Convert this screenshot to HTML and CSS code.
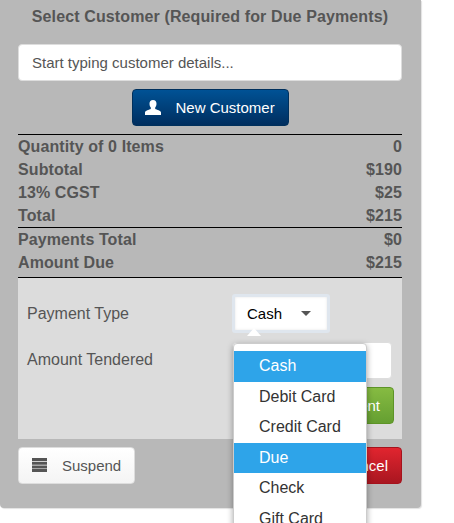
FILE: index.html
```html
<!DOCTYPE html>
<html lang="en">
<head>
  <meta charset="UTF-8">
  <meta name="viewport" content="width=device-width, initial-scale=1.0">
  <title>Register</title>
  <link rel="stylesheet" href="styles.css">
</head>
<body>
  <div class="panel">
    <h4 class="panel-title">Select Customer (Required for Due Payments)</h4>
    <input class="customer-input" type="text" placeholder="Start typing customer details...">
    <div class="new-customer-row">
      <button class="btn btn-blue">
        <svg class="icon" width="16" height="15" viewBox="0 0 16 15"><path fill="#fff" d="M8 0c2.300 0 3.500 1.600 3.500 3.800 0 1.500-.6 2.900-1.300 3.800v1.400c1.500.7 5.800 1.500 5.800 3.500V15H0v-2.500C0 10.500 4.300 9.700 5.800 9V7.600C5 6.700 4.500 5.300 4.500 3.800 4.500 1.600 5.700 0 8 0z"/></svg>
        New Customer
      </button>
    </div>

    <div class="totals">
      <div class="total-row"><span>Quantity of 0 Items</span><span>0</span></div>
      <div class="total-row"><span>Subtotal</span><span>$190</span></div>
      <div class="total-row"><span>13% CGST</span><span>$25</span></div>
      <div class="total-row"><span>Total</span><span>$215</span></div>
    </div>
    <div class="totals totals-last">
      <div class="total-row"><span>Payments Total</span><span>$0</span></div>
      <div class="total-row"><span>Amount Due</span><span>$215</span></div>
    </div>

    <div class="payment-box">
      <div class="form-row">
        <label class="form-label">Payment Type</label>
        <div class="select-wrap">
          <div class="select-toggle">Cash<span class="caret"></span></div>
          <span class="select-arrow"></span>
          <ul class="select-menu">
            <li class="active">Cash</li>
            <li>Debit Card</li>
            <li>Credit Card</li>
            <li class="active">Due</li>
            <li>Check</li>
            <li>Gift Card</li>
          </ul>
        </div>
      </div>
      <div class="form-row tendered-row">
        <label class="form-label">Amount Tendered</label>
        <input class="tendered-input" type="text">
      </div>
      <div class="add-payment-row">
        <button class="btn btn-green">Add Payment</button>
      </div>
    </div>

    <div class="actions">
      <button class="btn btn-white">
        <svg class="icon" width="15" height="14" viewBox="0 0 15 14"><path fill="#555" d="M0 0h15v3H0zM0 3.700h15v3H0zM0 7.400h15v3H0zM0 11h15v3H0z"/></svg>
        Suspend
      </button>
      <button class="btn btn-red">Cancel</button>
    </div>
  </div>
</body>
</html>
```

FILE: styles.css
```css
/* Reset */
* {
  margin: 0;
  padding: 0;
  box-sizing: border-box;
}
html, body {
  height: 523px;
  overflow: hidden;
}
body {
  font-family: "Liberation Sans", Arial, sans-serif;
  background: #fff;
  color: #555;
  font-size: 15px;
}

/* Panel */
.panel {
  width: 421px;
  height: 508px;
  background: #b8b8b8;
  border-radius: 0 0 4px 4px;
  box-shadow: 1px 1px 1px rgba(0, 0, 0, 0.12);
  padding: 8px 19px 0 18px;
}
.panel-title {
  text-align: center;
  font-size: 16px;
  line-height: 17px;
  font-weight: bold;
  letter-spacing: 0.12px;
  color: #555;
  margin-bottom: 19px;
}

/* Customer search */
.customer-input {
  display: block;
  width: 100%;
  height: 37px;
  border: 1px solid #ddd;
  border-radius: 4px;
  background: #fff;
  padding: 0 13px;
  font: 15px "Liberation Sans", Arial, sans-serif;
  color: #555;
}
.customer-input::placeholder {
  color: #555;
  opacity: 1;
}
.new-customer-row {
  display: flex;
  justify-content: center;
  margin-top: 8px;
  margin-bottom: 8px;
}

/* Buttons */
.btn {
  display: inline-flex;
  align-items: center;
  height: 37px;
  padding-bottom: 1px;
  border-radius: 4px;
  font: 15px "Liberation Sans", Arial, sans-serif;
  cursor: pointer;
}
.icon {
  flex: none;
}
.btn-blue {
  width: 157px;
  padding-left: 12px;
  gap: 15px;
  color: #fff;
  border: 1px solid #00305c;
  background: linear-gradient(#005295, #002e5f);
}
.btn-white {
  width: 117px;
  padding-left: 13px;
  gap: 15px;
  color: #555;
  border: 1px solid #ddd;
  background: linear-gradient(#fff, #f4f4f4);
}
.btn-green {
  width: 120px;
  justify-content: flex-end;
  padding-right: 13px;
  color: #fff;
  border: 1px solid #5d9427;
  background: linear-gradient(#86bb42, #659f31);
}
.btn-red {
  width: 120px;
  justify-content: flex-end;
  padding-right: 13px;
  color: #fff;
  border: 1px solid #a5121c;
  background: linear-gradient(#e1252f, #a91620);
}

/* Totals */
.totals {
  border-top: 1px solid #000;
}
.totals-last {
  padding-bottom: 3px;
}
.total-row {
  display: flex;
  justify-content: space-between;
  height: 23px;
  line-height: 23px;
  font-size: 16px;
  font-weight: bold;
  letter-spacing: 0.1px;
  color: #555;
}

/* Payment box */
.payment-box {
  position: relative;
  height: 162px;
  border-top: 1px solid #000;
  background: #dcdcdc;
  padding: 0 8px 0 9px;
}
.form-row {
  display: flex;
  align-items: center;
  height: 47px;
  margin-top: 12px;
}
.form-label {
  flex: none;
  width: 205px;
  font-size: 16px;
  color: #555;
}
.tendered-row {
  margin-top: 5px;
  height: 37px;
}
.tendered-row .form-label {
  padding-bottom: 2px;
}
.tendered-input {
  flex: 1;
  min-width: 0;
  height: 37px;
  border: 1px solid #ddd;
  border-radius: 4px;
  background: #fff;
  margin-right: 2px;
}
.add-payment-row {
  display: flex;
  justify-content: flex-end;
  margin-top: 8px;
}

/* Payment type dropdown */
.select-wrap {
  position: relative;
}
.select-toggle {
  display: flex;
  align-items: center;
  justify-content: space-between;
  width: 98px;
  height: 39px;
  padding: 0 16px 1px 12px;
  background: #fff;
  border: 3px solid #dfe6ee;
  border-radius: 3px;
  font-size: 15px;
  color: #000;
  box-shadow: inset 0 0 3px rgba(0, 0, 0, 0.1);
}
.caret {
  border-left: 5px solid transparent;
  border-right: 5px solid transparent;
  border-top: 5px solid #555;
}
.select-arrow {
  position: absolute;
  top: 34px;
  left: 15px;
  border-left: 7px solid transparent;
  border-right: 7px solid transparent;
  border-bottom: 8px solid #fff;
}
.select-menu {
  position: absolute;
  top: 49px;
  left: 1px;
  width: 134px;
  height: 300px;
  background: #fff;
  border: 1px solid #ccc;
  border-radius: 4px;
  box-shadow: 0 2px 6px rgba(0, 0, 0, 0.35);
  padding-top: 7px;
  list-style: none;
  z-index: 10;
}
.select-menu li {
  height: 30.5px;
  line-height: 30px;
  padding-left: 25px;
  font-size: 16px;
  color: #333;
}
.select-menu li.active {
  background: #2ea4e9;
  color: #fff;
}

/* Bottom actions */
.actions {
  display: flex;
  justify-content: space-between;
  margin-top: 8px;
}
```
